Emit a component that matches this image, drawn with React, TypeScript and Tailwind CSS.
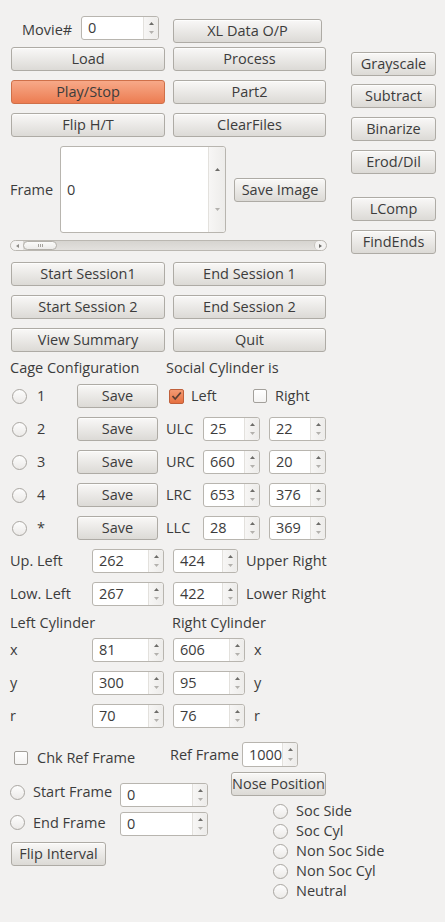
import React from "react";

function Btn({ children, className = "", orange = false }: { children: React.ReactNode; className?: string; orange?: boolean }) {
  return (
    <div
      className={`flex h-[24px] shrink-0 items-center justify-center rounded-[3px] border text-[#3c3c3c] ${
        orange
          ? "border-[#cf7049] bg-linear-to-b from-[#f7a988] to-[#ec7c51]"
          : "border-[#aeaba5] bg-linear-to-b from-[#f9f8f7] to-[#dcdad6] shadow-[inset_0_1px_0_rgba(255,255,255,0.7)]"
      } ${className}`}
    >
      {children}
    </div>
  );
}

function Arrow({ up }: { up?: boolean }) {
  return (
    <svg width="5" height="3" viewBox="0 0 5 3">
      {up ? <path d="M0 3 L2.5 0 L5 3 Z" fill="#6d6c69" /> : <path d="M0 0 L2.5 3 L5 0 Z" fill="#b3b1ad" />}
    </svg>
  );
}

function Spin({ v, className = "", tall = false }: { v: string; className?: string; tall?: boolean }) {
  return (
    <div className={`flex shrink-0 rounded-[3px] border border-[#b8b5af] bg-white ${tall ? "h-[87px]" : "h-[24px]"} ${className}`}>
      <div className="flex flex-1 items-center pl-[6px]">{v}</div>
      <div
        className={`flex ${tall ? "w-[17px]" : "w-[15px]"} flex-col items-center justify-around rounded-r-[3px] border-l border-[#e3e1dd] bg-linear-to-r from-[#f7f6f5] to-[#edecea] py-[2px]`}
      >
        <Arrow up />
        <Arrow />
      </div>
    </div>
  );
}

function Radio() {
  return <div className="h-[15px] w-[15px] shrink-0 rounded-full border border-[#a9a6a1] bg-linear-to-b from-[#fdfdfd] to-[#eceae8]" />;
}

function Check({ on = false }: { on?: boolean }) {
  if (on)
    return (
      <div className="flex h-[15px] w-[15px] shrink-0 items-center justify-center rounded-[2px] border border-[#c0603b] bg-linear-to-b from-[#f39a73] to-[#e6703f]">
        <svg width="11" height="10" viewBox="0 0 11 10">
          <path d="M1.5 5 L4.2 8 L9.8 1.5" fill="none" stroke="#5b3f33" strokeWidth="1.8" />
        </svg>
      </div>
    );
  return <div className="h-[14px] w-[14px] shrink-0 rounded-[2px] border border-[#a3a09b] bg-linear-to-b from-white to-[#f4f3f2]" />;
}

function Scrollbar() {
  return (
    <div className="ml-[10px] flex h-[11px] w-[317px] items-center overflow-hidden rounded-full border border-[#bab7b1] bg-linear-to-b from-[#d6d4d0] to-[#e3e1de]">
      <div className="flex h-full w-[12px] items-center justify-center bg-[#f4f3f2]">
        <svg width="3" height="4" viewBox="0 0 3 4">
          <path d="M3 0 L0 2 L3 4 Z" fill="#8d8b87" />
        </svg>
      </div>
      <div className="flex h-full w-[34px] items-center justify-center gap-[1px] rounded-full border border-[#b3b0aa] bg-linear-to-b from-[#fbfbfa] to-[#ecebe9]">
        <span className="h-[3px] w-px bg-[#a5a29d]" />
        <span className="h-[3px] w-px bg-[#a5a29d]" />
        <span className="h-[3px] w-px bg-[#a5a29d]" />
      </div>
      <div className="flex-1" />
      <div className="flex h-full w-[12px] items-center justify-center rounded-full border-l border-[#c6c3be] bg-[#f4f3f2]">
        <svg width="3" height="4" viewBox="0 0 3 4">
          <path d="M0 0 L3 2 L0 4 Z" fill="#6d6c69" />
        </svg>
      </div>
    </div>
  );
}

const cage = ["1", "2", "3", "4", "*"];
const corners = [
  ["ULC", "25", "22"],
  ["URC", "660", "20"],
  ["LRC", "653", "376"],
  ["LLC", "28", "369"],
];
const cyl = [
  ["x", "81", "606"],
  ["y", "300", "95"],
  ["r", "70", "76"],
];
const nose = ["Soc Side", "Soc Cyl", "Non Soc Side", "Non Soc Cyl", "Neutral"];

export default function App() {
  return (
    <div className="h-[922px] w-[445px] overflow-hidden bg-[#f2f1f0] font-['Open_Sans',sans-serif] text-[14.5px] leading-[20px] text-[#3c3c3c]">
      {/* top block */}
      <div className="flex pt-[16px]">
        <div className="flex w-[327px] flex-col">
          <div className="flex items-start">
            <span className="ml-[22px] mt-[4px] w-[59px]">Movie#</span>
            <Spin v="0" className="w-[78px]" />
            <Btn className="ml-[14px] mt-[3px] w-[149px]">XL Data O/P</Btn>
          </div>
          <div className="mt-[4px] flex gap-[8px] pl-[11px]">
            <Btn className="w-[154px]">Load</Btn>
            <Btn className="w-[153px]">Process</Btn>
          </div>
          <div className="mt-[9px] flex gap-[8px] pl-[11px]">
            <Btn orange className="w-[154px]">Play/Stop</Btn>
            <Btn className="w-[153px]">Part2</Btn>
          </div>
          <div className="mt-[9px] flex gap-[8px] pl-[11px]">
            <Btn className="w-[154px]">Flip H/T</Btn>
            <Btn className="w-[153px]">ClearFiles</Btn>
          </div>
          <div className="mt-[9px] flex items-center">
            <span className="w-[60px] pl-[10px]">Frame</span>
            <Spin tall v="0" className="w-[166px]" />
            <Btn className="ml-[8px] w-[92px]">Save Image</Btn>
          </div>
          <div className="mt-[7px]">
            <Scrollbar />
          </div>
          <div className="mt-[11px] flex gap-[8px] pl-[11px]">
            <Btn className="w-[154px]">Start Session1</Btn>
            <Btn className="w-[153px]">End Session 1</Btn>
          </div>
          <div className="mt-[9px] flex gap-[8px] pl-[11px]">
            <Btn className="w-[154px]">Start Session 2</Btn>
            <Btn className="w-[153px]">End Session 2</Btn>
          </div>
          <div className="mt-[9px] flex gap-[8px] pl-[11px]">
            <Btn className="w-[154px]">View Summary</Btn>
            <Btn className="w-[153px]">Quit</Btn>
          </div>
        </div>
        <div className="ml-[24px] mt-[36px] flex w-[85px] flex-col">
          <Btn>Grayscale</Btn>
          <Btn className="mt-[8px]">Subtract</Btn>
          <Btn className="mt-[9px]">Binarize</Btn>
          <Btn className="mt-[9px]">Erod/Dil</Btn>
          <Btn className="mt-[23px]">LComp</Btn>
          <Btn className="mt-[9px]">FindEnds</Btn>
        </div>
      </div>

      {/* cage configuration */}
      <div className="mt-[6px] flex h-[20px] items-center">
        <span className="w-[166px] pl-[10px]">Cage Configuration</span>
        <span>Social Cylinder is</span>
      </div>
      <div className="mt-[6px] flex flex-col gap-[9px]">
        {cage.map((c, i) => (
          <div key={c} className="flex h-[24px] items-center">
            <div className="flex w-[77px] items-center pl-[12px]">
              <Radio />
              <span className="ml-[10px]">{c}</span>
            </div>
            <Btn className="w-[81px]">Save</Btn>
            {i === 0 ? (
              <div className="ml-[8px] flex items-center">
                <div className="ml-[3px]">
                  <Check on />
                </div>
                <span className="ml-[7px] w-[62px]">Left</span>
                <Check />
                <span className="ml-[8px]">Right</span>
              </div>
            ) : (
              <div className="ml-[8px] flex items-center">
                <span className="w-[37px]">{corners[i - 1][0]}</span>
                <Spin v={corners[i - 1][1]} className="w-[57px]" />
                <Spin v={corners[i - 1][2]} className="ml-[9px] w-[57px]" />
              </div>
            )}
          </div>
        ))}
      </div>

      {/* corners */}
      <div className="mt-[9px] flex h-[24px] items-center">
        <span className="w-[92px] pl-[10px]">Up. Left</span>
        <Spin v="262" className="w-[72px]" />
        <Spin v="424" className="ml-[9px] w-[65px]" />
        <span className="ml-[8px]">Upper Right</span>
      </div>
      <div className="mt-[9px] flex h-[24px] items-center">
        <span className="w-[92px] pl-[10px]">Low. Left</span>
        <Spin v="267" className="w-[72px]" />
        <Spin v="422" className="ml-[9px] w-[65px]" />
        <span className="ml-[8px]">Lower Right</span>
      </div>
      <div className="mt-[6px] flex h-[22px] items-center">
        <span className="w-[172px] pl-[10px]">Left Cylinder</span>
        <span>Right Cylinder</span>
      </div>
      <div className="mt-[4px] flex flex-col gap-[9px]">
        {cyl.map(([l, a, b]) => (
          <div key={l} className="flex h-[24px] items-center">
            <span className="w-[92px] pl-[10px]">{l}</span>
            <Spin v={a} className="w-[72px]" />
            <Spin v={b} className="ml-[9px] w-[72px]" />
            <span className="ml-[9px]">{l}</span>
          </div>
        ))}
      </div>

      {/* reference frame */}
      <div className="mt-[14px] flex h-[25px] items-center">
        <div className="flex w-[170px] items-center self-stretch pl-[14px] pt-[7px]">
          <Check />
          <span className="ml-[9px]">Chk Ref Frame</span>
        </div>
        <span className="w-[72px]">Ref Frame</span>
        <Spin v="1000" className="h-[25px] w-[56px]" />
      </div>
      <div className="mt-[5px] flex">
        <div className="flex w-[231px] flex-col">
          <div className="mt-[11px] flex h-[24px] items-center">
            <div className="mb-[6px] flex w-[120px] items-center pl-[10px]">
              <Radio />
              <span className="ml-[8px]">Start Frame</span>
            </div>
            <Spin v="0" className="w-[88px]" />
          </div>
          <div className="mt-[5px] flex h-[24px] items-center">
            <div className="mb-[3px] flex w-[120px] items-center pl-[10px]">
              <Radio />
              <span className="ml-[8px]">End Frame</span>
            </div>
            <Spin v="0" className="w-[88px]" />
          </div>
          <Btn className="ml-[11px] mt-[6px] w-[95px]">Flip Interval</Btn>
        </div>
        <div className="flex flex-col">
          <Btn className="w-[95px]">Nose Position</Btn>
          <div className="mt-[5px] flex flex-col">
            {nose.map((n) => (
              <div key={n} className="flex h-[20px] items-center pl-[42px]">
                <Radio />
                <span className="ml-[8px]">{n}</span>
              </div>
            ))}
          </div>
        </div>
      </div>
    </div>
  );
}
